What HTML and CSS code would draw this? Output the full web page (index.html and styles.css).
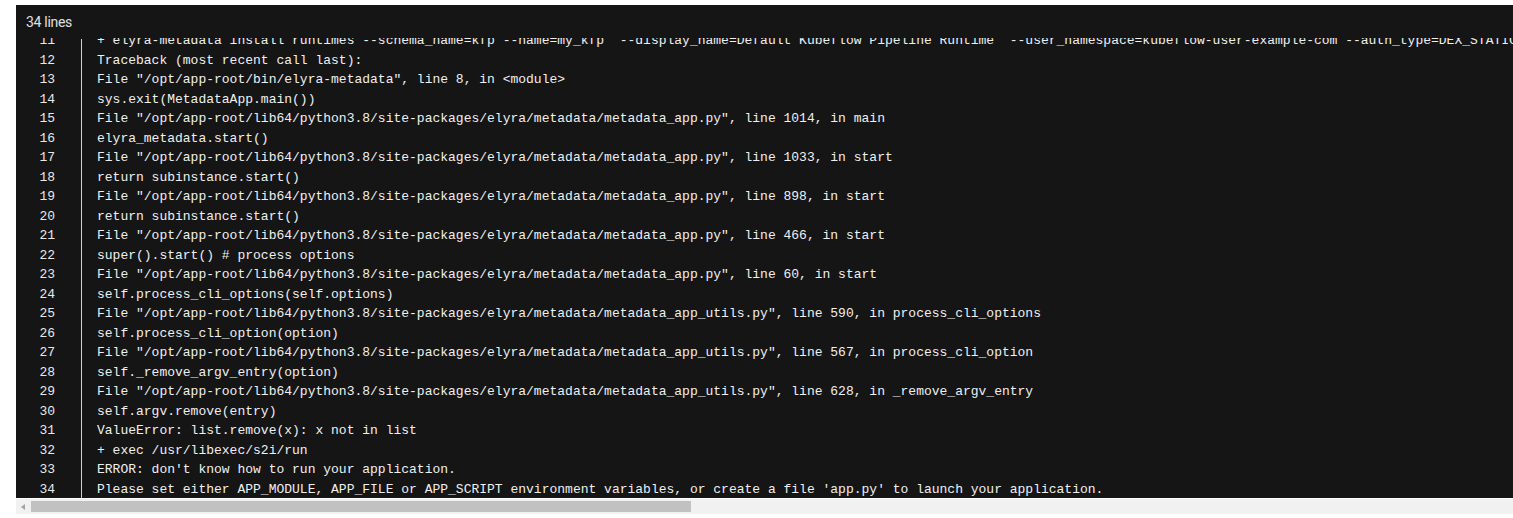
FILE: index.html
```html
<!DOCTYPE html>
<html lang="en">
<head>
<meta charset="utf-8">
<title>Log viewer</title>
<link rel="stylesheet" href="styles.css">
</head>
<body>
<div class="viewer">
  <div class="panel">
    <div class="header">34 lines</div>
    <div class="body">
      <div class="lines">
        <div class="row"><span class="num">11</span><span class="txt">+ elyra-metadata install runtimes --schema_name=kfp --name=my_kfp  --display_name=Default Kubeflow Pipeline Runtime  --user_namespace=kubeflow-user-example-com --auth_type=DEX_STATIC_PASSWORDS --api_endpoint=http://ml-pipeline-ui.kubeflow:80/pipeline</span></div>
        <div class="row"><span class="num">12</span><span class="txt">Traceback (most recent call last):</span></div>
        <div class="row"><span class="num">13</span><span class="txt">File "/opt/app-root/bin/elyra-metadata", line 8, in &lt;module&gt;</span></div>
        <div class="row"><span class="num">14</span><span class="txt">sys.exit(MetadataApp.main())</span></div>
        <div class="row"><span class="num">15</span><span class="txt">File "/opt/app-root/lib64/python3.8/site-packages/elyra/metadata/metadata_app.py", line 1014, in main</span></div>
        <div class="row"><span class="num">16</span><span class="txt">elyra_metadata.start()</span></div>
        <div class="row"><span class="num">17</span><span class="txt">File "/opt/app-root/lib64/python3.8/site-packages/elyra/metadata/metadata_app.py", line 1033, in start</span></div>
        <div class="row"><span class="num">18</span><span class="txt">return subinstance.start()</span></div>
        <div class="row"><span class="num">19</span><span class="txt">File "/opt/app-root/lib64/python3.8/site-packages/elyra/metadata/metadata_app.py", line 898, in start</span></div>
        <div class="row"><span class="num">20</span><span class="txt">return subinstance.start()</span></div>
        <div class="row"><span class="num">21</span><span class="txt">File "/opt/app-root/lib64/python3.8/site-packages/elyra/metadata/metadata_app.py", line 466, in start</span></div>
        <div class="row"><span class="num">22</span><span class="txt">super().start() # process options</span></div>
        <div class="row"><span class="num">23</span><span class="txt">File "/opt/app-root/lib64/python3.8/site-packages/elyra/metadata/metadata_app.py", line 60, in start</span></div>
        <div class="row"><span class="num">24</span><span class="txt">self.process_cli_options(self.options)</span></div>
        <div class="row"><span class="num">25</span><span class="txt">File "/opt/app-root/lib64/python3.8/site-packages/elyra/metadata/metadata_app_utils.py", line 590, in process_cli_options</span></div>
        <div class="row"><span class="num">26</span><span class="txt">self.process_cli_option(option)</span></div>
        <div class="row"><span class="num">27</span><span class="txt">File "/opt/app-root/lib64/python3.8/site-packages/elyra/metadata/metadata_app_utils.py", line 567, in process_cli_option</span></div>
        <div class="row"><span class="num">28</span><span class="txt">self._remove_argv_entry(option)</span></div>
        <div class="row"><span class="num">29</span><span class="txt">File "/opt/app-root/lib64/python3.8/site-packages/elyra/metadata/metadata_app_utils.py", line 628, in _remove_argv_entry</span></div>
        <div class="row"><span class="num">30</span><span class="txt">self.argv.remove(entry)</span></div>
        <div class="row"><span class="num">31</span><span class="txt">ValueError: list.remove(x): x not in list</span></div>
        <div class="row"><span class="num">32</span><span class="txt">+ exec /usr/libexec/s2i/run</span></div>
        <div class="row"><span class="num">33</span><span class="txt">ERROR: don't know how to run your application.</span></div>
        <div class="row"><span class="num">34</span><span class="txt">Please set either APP_MODULE, APP_FILE or APP_SCRIPT environment variables, or create a file 'app.py' to launch your application.</span></div>
      </div>
    </div>
  </div>
  <div class="hscroll">
    <span class="arrow"></span>
    <span class="thumb"></span>
  </div>
</div>
</body>
</html>
```

FILE: styles.css
```css
html, body {
  margin: 0;
  padding: 0;
  background: #ffffff;
}

body {
  padding: 5px 0 0 16px;
  overflow: hidden;
}

.viewer {
  width: 1497px;
}

.panel {
  background: #151515;
  height: 493px;
  display: flex;
  flex-direction: column;
  overflow: hidden;
}

.header {
  height: 33px;
  flex: none;
  padding-left: 10px;
  display: flex;
  align-items: center;
  font-family: "Roboto", "Liberation Sans", sans-serif;
  font-size: 14px;
  color: #e0e0e0;
  letter-spacing: -0.3px;
}

.body {
  flex: 1;
  overflow: hidden;
}

.lines {
  margin-top: -7px;
  font-family: "Liberation Mono", "DejaVu Sans Mono", monospace;
  font-size: 13px;
  line-height: 19.5px;
  color: #f0f0f0;
}

.row {
  display: flex;
  white-space: pre;
}

.num {
  flex: none;
  width: 66px;
  box-sizing: border-box;
  padding-right: 26px;
  text-align: right;
  border-right: 1px solid #d2d2d2;
  color: #e8e8e8;
}

.row:first-child .num {
  border-right-color: transparent;
  background: linear-gradient(to right, transparent 65px, #d2d2d2 65px) no-repeat 0 8px / 66px 100%;
}

.txt {
  padding-left: 15px;
}

.hscroll {
  height: 15px;
  margin-top: 1px;
  background: #f1f1f1;
  display: flex;
  align-items: center;
}

.arrow {
  flex: none;
  width: 0;
  height: 0;
  margin-left: 5px;
  border-top: 3.5px solid transparent;
  border-bottom: 3.5px solid transparent;
  border-right: 4px solid #a3a3a3;
}

.thumb {
  flex: none;
  margin-left: 6px;
  width: 660px;
  height: 11px;
  background: #c1c1c1;
}
```
